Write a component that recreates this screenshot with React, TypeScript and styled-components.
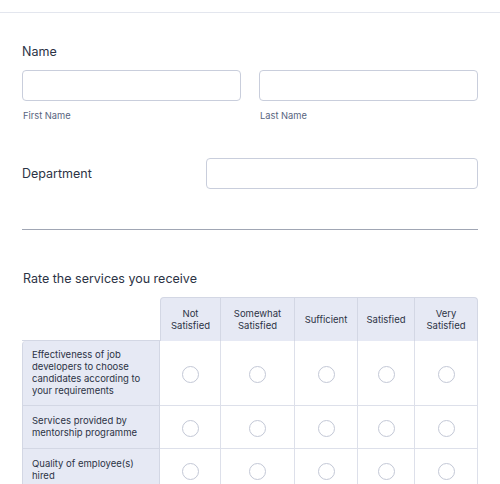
import styled, { createGlobalStyle } from "styled-components";

const GlobalStyle = createGlobalStyle`
  body {
    margin: 0;
    background: #fff;
    font-family: Inter, "Noto Sans", sans-serif;
    color: #2c3345;
  }
`;

const Page = styled.div`
  width: 500px;
  padding-top: 12px;
`;

const TopLine = styled.div`
  height: 1px;
  background: #e3e6ee;
`;

const Form = styled.div`
  padding: 0 22px;
`;

const Section = styled.div`
  padding-top: 30px;
`;

const Label = styled.div`
  font-size: 12.5px;
  line-height: 18px;
  color: #2c3345;
`;

const NameRow = styled.div`
  display: grid;
  grid-template-columns: 219px 219px;
  column-gap: 18px;
  margin-top: 9px;
`;

const Field = styled.div`
  display: flex;
  flex-direction: column;
`;

const Input = styled.div`
  height: 29px;
  border: 1px solid #c9cedc;
  border-radius: 4px;
  background: #fff;
`;

const SubLabel = styled.div`
  margin-top: 8px;
  margin-left: 1px;
  font-size: 9.3px;
  line-height: 14px;
  color: #57647e;
`;

const DeptRow = styled.div`
  display: flex;
  align-items: center;
  margin-top: 35px;
`;

const DeptLabel = styled(Label)`
  width: 184px;
`;

const DeptInput = styled(Input)`
  flex: 1;
`;

const Divider = styled.div`
  height: 1px;
  background: #a0a6b4;
  margin-top: 40px;
`;

const TableTitle = styled(Label)`
  margin-top: 40px;
  margin-left: 1px;
`;

const Matrix = styled.table`
  margin-top: 9px;
  border-collapse: separate;
  border-spacing: 0;
  table-layout: fixed;
  width: 456px;
`;

const Col = styled.col<{ $w: number }>`
  width: ${(p) => p.$w}px;
`;

const HeadCell = styled.th<{ $first?: boolean; $last?: boolean }>`
  height: 43px;
  padding: 0 3px;
  background: #e6e9f4;
  border-top: 1px solid #d3d7e4;
  border-right: 1px solid #d3d7e4;
  border-left: ${(p) => (p.$first ? "1px solid #d3d7e4" : "none")};
  border-top-left-radius: ${(p) => (p.$first ? "4px" : "0")};
  border-top-right-radius: ${(p) => (p.$last ? "4px" : "0")};
  font-size: 9.5px;
  line-height: 12px;
  font-weight: 400;
  color: #2c3345;
  text-align: center;
  vertical-align: middle;
`;

const Corner = styled.th`
  background: #fff;
  border-bottom: 1px solid #d3d7e4;
`;

const RowLabel = styled.td<{ $h: number; $first?: boolean }>`
  height: ${(p) => p.$h}px;
  padding: 0 9px;
  background: #e6e9f4;
  border-left: 1px solid #d3d7e4;
  border-right: 1px solid #d3d7e4;
  border-bottom: 1px solid #d3d7e4;
  border-top-left-radius: ${(p) => (p.$first ? "4px" : "0")};
  font-size: 9.5px;
  line-height: 12px;
  color: #2c3345;
  vertical-align: middle;
`;

const Cell = styled.td`
  border-right: 1px solid #dde0ea;
  border-bottom: 1px solid #dde0ea;
  text-align: center;
  vertical-align: middle;
`;

const Radio = styled.span`
  display: inline-block;
  width: 15px;
  height: 15px;
  border: 1px solid #c3c8d6;
  border-radius: 50%;
  background: #fff;
  vertical-align: middle;
`;

const columns = [
  { label: "Not Satisfied", w: 61 },
  { label: "Somewhat Satisfied", w: 74 },
  { label: "Sufficient", w: 63 },
  { label: "Satisfied", w: 57 },
  { label: "Very Satisfied", w: 63 },
];

const rows = [
  { label: "Effectiveness of job developers to choose candidates according to your requirements", h: 64 },
  { label: "Services provided by mentorship programme", h: 42 },
  { label: "Quality of employee(s) hired", h: 42 },
];

export default function App() {
  return (
    <Page>
      <GlobalStyle />
      <TopLine />
      <Form>
        <Section>
          <Label>Name</Label>
          <NameRow>
            <Field>
              <Input />
              <SubLabel>First Name</SubLabel>
            </Field>
            <Field>
              <Input />
              <SubLabel>Last Name</SubLabel>
            </Field>
          </NameRow>
        </Section>
        <DeptRow>
          <DeptLabel>Department</DeptLabel>
          <DeptInput />
        </DeptRow>
        <Divider />
        <TableTitle>Rate the services you receive</TableTitle>
        <Matrix>
          <colgroup>
            <Col $w={138} />
            {columns.map((c) => (
              <Col key={c.label} $w={c.w} />
            ))}
          </colgroup>
          <thead>
            <tr>
              <Corner />
              {columns.map((c, i) => (
                <HeadCell key={c.label} $first={i === 0} $last={i === columns.length - 1}>
                  {c.label}
                </HeadCell>
              ))}
            </tr>
          </thead>
          <tbody>
            {rows.map((r, ri) => (
              <tr key={r.label}>
                <RowLabel $h={r.h} $first={ri === 0}>{r.label}</RowLabel>
                {columns.map((c) => (
                  <Cell key={c.label}>
                    <Radio />
                  </Cell>
                ))}
              </tr>
            ))}
          </tbody>
        </Matrix>
      </Form>
    </Page>
  );
}
